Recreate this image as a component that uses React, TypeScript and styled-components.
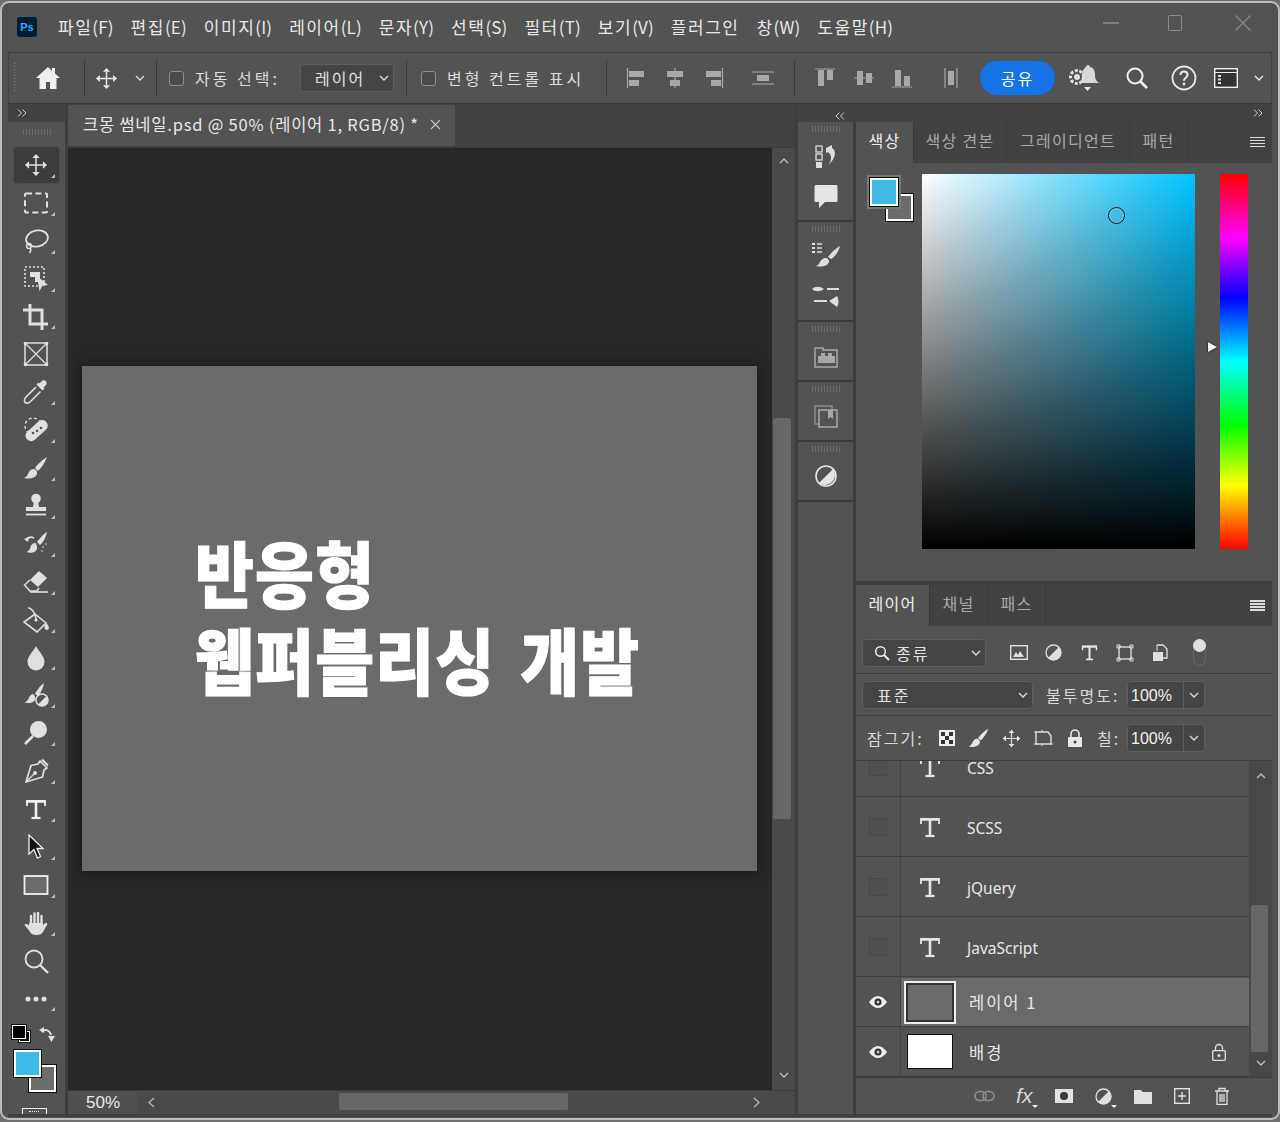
import React from "react";
import styled, { createGlobalStyle } from "styled-components";

const Global = createGlobalStyle`
  html, body { margin: 0; padding: 0; background: #6e6e6e; }
  * { box-sizing: border-box; }
  body { font-family: "Noto Sans CJK KR", "Liberation Sans", sans-serif; }
`;

const Win = styled.div`
  width: 1280px; height: 1119px; margin-top: 1px; background: #535353; color: #e4e4e4;
  border: 2px solid #bdbdbd; border-radius: 9px;
  display: flex; flex-direction: column; overflow: hidden; padding: 0 6px 4px 5px;
`;
const TitleBar = styled.div`
  height: 49px; flex: none; display: flex; align-items: center; padding: 0 0 2px 15px; margin: 0 -6px 0 -5px;
`;
const Logo = styled.div`
  width: 20px; height: 20px; border-radius: 3px; background: #001e36; color: #31a8ff;
  font: 700 11px "Liberation Sans", sans-serif; display: flex; align-items: center; justify-content: center; margin-right: 21px;
`;
const Menu = styled.div`display: flex; gap: 17px; flex: 1;`;
const MenuItem = styled.span`
  font-size: 17px; letter-spacing: 1.5px; white-space: nowrap; color: #e8e8e8; line-height: 24px;
  span { font-size: 17px; letter-spacing: 0.15px; }
`;
const WinCtl = styled.div`display: flex; margin-right: 27px; align-items: center; margin-top: -8px; svg { display: block; }`;
const CtlGap = styled.div<{ $w: number }>`width: ${p => p.$w}px; flex: none;`;

const OptionsBar = styled.div`
  height: 52px; flex: none; display: flex; align-items: center; background: #535353;
  border-top: 1px solid #3e3e3e; border-bottom: 1px solid #3a3a3a; margin: 0 0 0 1px;
  box-shadow: inset 1px 0 #454545, inset -1px 0 #454545;
`;
const Slot = styled.div<{ $w: number }>`
  width: ${p => p.$w}px; flex: none; display: flex; align-items: center; justify-content: center; height: 34px;
`;
const Sep = styled.div`width: 1px; height: 36px; background: #3c3c3c; flex: none;`;
const Grip = styled.div`width: 2px; height: 30px; margin-left: 6px; flex: none; background: repeating-linear-gradient(#6c6c6c 0 1px, transparent 1px 3px); margin-right: 6px;`;
const Check = styled.div`
  width: 15px; height: 15px; border: 1px solid #8f8f8f; border-radius: 3px; flex: none; background: #4a4a4a;
`;
const OptLabel = styled.span<{ $w: number; $ls: number }>`
  font-size: 16px; width: ${p => p.$w}px; flex: none; white-space: nowrap; letter-spacing: ${p => p.$ls}px; color: #dcdcdc;
`;
const Select = styled.div<{ $w: number; $h?: number }>`
  width: ${p => p.$w}px; height: ${p => p.$h ?? 28}px; flex: none; background: #454545; border: 1px solid #5f5f5f; border-radius: 4px;
  display: flex; align-items: center; justify-content: space-between; font-size: 16px; color: #e0e0e0; padding: 0 4px 0 14px; letter-spacing: 2px;
`;
const SearchSelect = styled(Select)`padding-left: 11px;`;
const SearchText = styled.span`flex: 1; margin-left: 6px;`;
const ShareBtn = styled.div`
  width: 75px; height: 34px; border-radius: 17px; background: #1473e6; color: #fff; font-size: 16px; display: flex; align-items: center; justify-content: center; flex: none; letter-spacing: 2px;
`;

const Work = styled.div`flex: 1; display: flex; min-height: 0; gap: 3px; background: #3e3e3e; margin-left: 1px; box-shadow: 0 3px #3e3e3e;`;
const ToolCol = styled.div`
  width: 57px; flex: none; display: flex; flex-direction: column; overflow: hidden; background: #535353;
`;
const CollapseBar = styled.div`
  height: 18px; flex: none; background: #424242; display: flex; align-items: center; padding: 0 9px;
  justify-content: space-between;
`;
const LeftChev = styled.div`margin-left: 28px;`;
const Gripper = styled.div`
  height: 24px; flex: none; display: flex; align-items: center; justify-content: center; padding-bottom: 4px;
  &::before { content: ""; width: 28px; height: 6px; background: repeating-linear-gradient(90deg, #6c6c6c 0 1px, transparent 1px 3px); }
`;
const ToolBtn = styled.div<{ $active?: boolean; $fly?: boolean }>`
  height: 37.9px; flex: none; position: relative; display: flex; align-items: center; justify-content: center; margin: 0 5px; border-radius: 4px; padding-right: 2px;
  background: ${p => (p.$active ? "#3c3c3c" : "transparent")};
  border: 1px solid ${p => (p.$active ? "#4c4c4c" : "transparent")};
  &::after { content: ""; display: ${p => (p.$fly ? "block" : "none")}; position: absolute; right: 4px; bottom: 5px; border: 2.5px solid transparent; border-right-color: #bdbdbd; border-bottom-color: #bdbdbd; }
`;
const SwatchBox = styled.div`height: 94px; flex: none; position: relative; margin-top: 2px;`;
const Swatch = styled.div<{ $c: string; $x: number; $y: number; $s: number; $b?: number }>`
  position: absolute; left: ${p => p.$x}px; top: ${p => p.$y}px; width: ${p => p.$s}px; height: ${p => p.$s}px;
  background: ${p => p.$c}; border: ${p => p.$b ?? 2}px solid #fff; box-shadow: 0 0 0 1px #111;
`;
const SwapIcon = styled.div`position: absolute; left: 31px; top: 6px;`;
const QuickMask = styled.div`
  position: absolute; left: 14px; top: 89px; width: 25px; height: 12px; border: 1.5px solid #eee;
  &::after { content: ""; position: absolute; left: 6px; top: 2px; width: 10px; border-top: 1.5px dotted #eee; }
`;

const DocCol = styled.div`width: 727px; flex: none; display: flex; flex-direction: column;`;
const TabRow = styled.div`height: 44px; flex: none; background: #424242; display: flex; padding-top: 1px; border-bottom: 1px solid #3a3a3a;`;
const DocTab = styled.div`
  width: 387px; background: #535353; height: 41px; display: flex; align-items: center; padding: 0 0 3px 15px; white-space: nowrap; color: #e8e8e8; gap: 11px;
  span { font-size: 16.5px; letter-spacing: 0.78px; }
`;
const DocBody = styled.div`flex: 1; display: flex; min-height: 0;`;
const Canvas = styled.div`flex: 1; background: #282828; padding: 218px 0 0 14px;`;
const Sheet = styled.div`
  width: 675px; height: 505px; background: #6b6b6b; box-shadow: 0 0 14px rgba(0,0,0,.45); padding: 161px 0 0 113px;
`;
const Headline = styled.div`
  color: #fff; font-weight: 900; font-size: 64px; line-height: 78px; letter-spacing: 1.2px; word-spacing: 9px; -webkit-text-stroke: 1px #fff; white-space: nowrap;
  transform: scaleY(1.12); transform-origin: 0 0;
`;
const VScroll = styled.div`
  width: 23px; flex: none; background: #4a4a4a; display: flex; flex-direction: column; align-items: center; position: relative;
`;
const Thumb = styled.div<{ $top: number; $h: number; $w: number; $left: number }>`
  position: absolute; top: ${p => p.$top}px; left: ${p => p.$left}px; height: ${p => p.$h}px; width: ${p => p.$w}px; background: #676767; border-radius: 2px;
`;
const ScrollArrow = styled.div<{ $pos: string }>`
  position: absolute; ${p => p.$pos}; left: 0; right: 0; display: flex; justify-content: center;
`;
const StatusBar = styled.div`height: 24px; flex: none; display: flex; background: #4a4a4a; border-top: 1px solid #3a3a3a;`;
const Zoom = styled.div`width: 69px; flex: none; background: #505050; font: 17px/24px "Liberation Sans", sans-serif; padding-left: 18px; color: #e8e8e8;`;
const HScroll = styled.div`flex: 1; position: relative; display: flex; align-items: center; justify-content: space-between; padding: 0 35px 0 11px;`;
const HThumb = styled.div`position: absolute; left: 202px; top: 2px; width: 229px; height: 17px; background: #676767; border-radius: 2px;`;

const Side = styled.div`flex: 1; display: flex; flex-direction: column; min-width: 0;`;
const SideBody = styled.div`flex: 1; display: flex; gap: 3px; min-height: 0;`;
const Dock = styled.div`width: 55px; flex: none; display: flex; flex-direction: column;`;
const DockSec = styled.div<{ $h?: number }>`
  ${p => (p.$h ? `height:${p.$h}px; flex:none; border-bottom: 2px solid #3a3a3a;` : "flex:1;")}
  background: #535353; display: flex; flex-direction: column; align-items: center;
  & > ${Gripper} { height: 14px; padding-bottom: 0; }
`;
const DockIcon = styled.div<{ $h: number }>`height: ${p => p.$h}px; display: flex; align-items: center; justify-content: center; flex: none;`;
const Panels = styled.div`flex: 1; display: flex; flex-direction: column; gap: 4px; min-width: 0;`;
const Panel = styled.div<{ $h?: number }>`
  display: flex; flex-direction: column; ${p => (p.$h ? `height:${p.$h}px; flex:none;` : "flex:1; min-height:0;")}; background: #535353;
`;
const Tabs = styled.div`height: 41px; flex: none; display: flex; background: #424242; align-items: stretch;`;
const Tab = styled.div<{ $w: number; $on?: boolean }>`
  width: ${p => p.$w}px; flex: none; display: flex; align-items: center; justify-content: center; padding-bottom: 5px;
  font-size: 16px; letter-spacing: 1.3px; color: ${p => (p.$on ? "#f0f0f0" : "#a8a8a8")};
  background: ${p => (p.$on ? "#535353" : "transparent")}; border-right: 1px solid #3a3a3a;
`;
const Burger = styled.div`
  margin-left: auto; margin-right: 7px; align-self: center; width: 15px; height: 11px;
  background: repeating-linear-gradient(#dcdcdc 0 1.5px, transparent 1.5px 3px);
`;
const ColorBody = styled.div`flex: 1; display: flex; position: relative; padding: 11px 0 0 66px; gap: 25px;`;
const Field = styled.div`
  width: 273px; height: 375px; position: relative; flex: none;
  background: linear-gradient(to top, #000, rgba(0,0,0,0)), linear-gradient(to right, #fff, #00c3ff);
`;
const FieldMark = styled.div`
  position: absolute; left: 186px; top: 33px; width: 17px; height: 17px; border-radius: 50%; border: 1.5px solid #111; box-shadow: inset 0 0 0 1px rgba(255,255,255,.25);
`;
const Hue = styled.div`
  width: 28px; height: 375px; flex: none;
  background: linear-gradient(to bottom, #f00 0%, #f0f 17%, #00f 33%, #0ff 50%, #0f0 67%, #ff0 83%, #f00 100%);
  position: relative;
`;
const HueMark = styled.div`
  position: absolute; left: -12px; top: 168px; width: 0; height: 0; border-left: 9px solid #f2f2f2; border-top: 5px solid transparent; border-bottom: 5px solid transparent;
  filter: drop-shadow(0 0 1px #000);
`;
const PanelSwatch = styled.div<{ $c: string; $x: number; $y: number; $s: number; $ring?: boolean }>`
  position: absolute; left: ${p => p.$x}px; top: ${p => p.$y}px; width: ${p => p.$s}px; height: ${p => p.$s}px; background: ${p => p.$c};
  border: 2px solid #fff; box-shadow: 0 0 0 1px #111 ${p => (p.$ring ? ", 0 0 0 3px #777" : "")};
`;

const Row = styled.div<{ $h: number; $pt?: number }>`
  height: ${p => p.$h}px; flex: none; display: flex; align-items: center; border-bottom: 1px solid #3e3e3e; padding-left: 6px; padding-top: ${p => p.$pt ?? 0}px;
`;
const Lbl = styled.span<{ $w: number }>`
  width: ${p => p.$w}px; flex: none; font-size: 16px; color: #d8d8d8; white-space: nowrap; letter-spacing: 2px;
`;
const Input = styled.div`
  width: 78px; height: 28px; flex: none; border: 1px solid #5f5f5f; border-radius: 4px; display: flex; background: #454545; align-items: stretch;
  font: 16px/27px "Liberation Sans", sans-serif; color: #f0f0f0;
`;
const InputVal = styled.span`width: 56px; padding-left: 3px; border-right: 1px solid #5f5f5f;`;
const InputBtn = styled.span`flex: 1; display: flex; align-items: center; justify-content: center;`;
const Knob = styled.div`
  width: 13px; height: 27px; border: 1px solid #6a6a6a; border-radius: 7px; position: relative; flex: none;
  &::before { content: ""; position: absolute; left: -1px; top: -1px; width: 13px; height: 13px; border-radius: 50%; background: #e0e0e0; }
`;
const ListWrap = styled.div`flex: 1; display: flex; min-height: 0;`;
const List = styled.div`flex: 1; display: flex; flex-direction: column; justify-content: flex-end; overflow: hidden; min-width: 0;`;
const Layer = styled.div<{ $h: number }>`
  height: ${p => p.$h}px; flex: none; display: flex; align-items: center; border-bottom: 1px solid #3e3e3e;
`;
const EyeCell = styled.div`
  width: 45px; align-self: stretch; flex: none; display: flex; align-items: center; justify-content: center; border-right: 1px solid #444;
`;
const Vis = styled.div`width: 18px; height: 18px; border: 1px solid #484848; background: #505050;`;
const LayerBody = styled.div<{ $sel?: boolean }>`
  flex: 1; align-self: stretch; display: flex; align-items: center; min-width: 0; background: ${p => (p.$sel ? "#6a6a6a" : "transparent")}; margin-top: ${p => (p.$sel ? 1 : 0)}px; padding-right: 22px;
`;
const TCell = styled.div`width: 58px; display: flex; justify-content: center; flex: none; margin-right: 8px; padding-top: 1px;`;
const LayerName = styled.span<{ $ko?: boolean }>`
  font-family: ${p => (p.$ko ? `"Noto Sans CJK KR", sans-serif` : `"Noto Sans", sans-serif`)}; font-size: ${p => (p.$ko ? 16.5 : 15.5)}px; color: #e8e8e8; flex: 1; letter-spacing: ${p => (p.$ko ? 2 : 0)}px; margin-left: ${p => (p.$ko ? 7 : 0)}px; padding-top: ${p => (p.$ko ? 0 : 3)}px;
`;
const ThumbSel = styled.div`
  width: 52px; height: 43px; border: 2px solid #eee; margin: 0 6px 0 3px; flex: none; background: #6b6b6b; box-shadow: inset 0 0 0 2px #333;
`;
const ThumbBg = styled.div`
  width: 46px; height: 35px; background: #fff; border: 1px solid #111; margin: 0 9px 0 6px; flex: none;
`;
const LScroll = styled.div`width: 23px; flex: none; background: #484848; position: relative;`;
const Footer = styled.div`
  height: 37px; flex: none; display: flex; align-items: center; padding-left: 109px; border-top: 1px solid #3e3e3e;
`;
const FootSlot = styled.div<{ $fly?: boolean }>`
  width: 39.5px; height: 24px; position: relative; display: flex; align-items: center; justify-content: center; flex: none; color: #d8d8d8; font: italic 21px "Liberation Sans", sans-serif;
  &::after { content: ""; display: ${p => (p.$fly ? "block" : "none")}; position: absolute; left: 27px; bottom: 0; border: 3.5px solid transparent; border-top-color: #eee; border-bottom-width: 0; }
`;

const W = "#e0e0e0";
const Svg = ({ s = 26, vb = 26, children }: { s?: number; vb?: number; children: React.ReactNode }) => (
  <svg width={s} height={s} viewBox={`0 0 ${vb} ${vb}`} fill="none" stroke="none">{children}</svg>
);
const Chev = ({ c = "#d8d8d8", up = false }: { c?: string; up?: boolean }) => (
  <svg width="10" height="6" viewBox="0 0 10 6" fill="none"><path d={up ? "M1 5l4-4 4 4" : "M1 1l4 4 4-4"} stroke={c} strokeWidth="1.4" /></svg>
);
const SideChev = ({ left }: { left?: boolean }) => (
  <svg width="7" height="11" viewBox="0 0 7 11" fill="none"><path d={left ? "M6 1L1 5.5 6 10" : "M1 1l5 4.5L1 10"} stroke="#bdbdbd" strokeWidth="1.2" /></svg>
);
const DoubleChev = ({ left }: { left?: boolean }) => (
  <svg width="10" height="8" viewBox="0 0 10 8" fill="none">
    <path d={left ? "M4.500.5L1 4l3.500 3.500M9 .5L5.500 4 9 7.500" : "M1 .5L4.500 4 1 7.500M5.500 .5L9 4 5.500 7.500"} stroke="#d0d0d0" strokeWidth="1" />
  </svg>
);
const MoveI = ({ s = 26, c = W }: { s?: number; c?: string }) => (
  <Svg s={s}>
    <path d="M13 1l4 4.500H9zM13 25l4-4.500H9zM1 13l4.500-4v8zM25 13l-4.500-4v8z" fill={c} />
    <path d="M13 5v16M5 13h16" stroke={c} strokeWidth="1.600" />
  </Svg>
);
const SerifT = ({ s = 22, c = "#e6e6e6" }: { s?: number; c?: string }) => (
  <svg width={s} height={s} viewBox="0 0 22 22" fill="none">
    <path d="M2 8V3h18v5" stroke={c} strokeWidth="1.800" />
    <path d="M2 3.500h18M11 3v17" stroke={c} strokeWidth="2.600" />
    <path d="M6.500 20h9" stroke={c} strokeWidth="2.200" />
  </svg>
);
const brushPath = "M24 2C20 4 14 10 12 13l3 3C18 13 22 8 24 2zM11 14c-4 0-5 3-6 5-.5 1.500-2 3-4 4 4 1 11 1 13-4 .5-2-1-5-3-5z";

const toolIcons: React.ReactNode[] = [
  <MoveI key="m" s={24} />,
  <Svg key="a"><rect x="2" y="3.500" width="22" height="19" rx="1" stroke={W} strokeWidth="2" strokeDasharray="6 3.500" /></Svg>,
  <Svg key="b"><ellipse cx="14" cy="10.500" rx="11" ry="8" stroke={W} strokeWidth="1.800" transform="rotate(-12 14 10.500)" /><circle cx="6" cy="18" r="2.400" stroke={W} strokeWidth="1.500" /><path d="M7 20c1 1 1 3-.5 5" stroke={W} strokeWidth="1.500" /></Svg>,
  <Svg key="c"><rect x="2" y="1" width="19" height="19" stroke={W} strokeWidth="1.600" strokeDasharray="2 2" /><path d="M7 6h10v10h-5v-5H7z" fill={W} /><path d="M14 10l11 9-5.500 .5-3 5.500z" fill={W} /></Svg>,
  <Svg key="d"><path d="M7 0v20h18M0 6h19v20" stroke={W} strokeWidth="3" /></Svg>,
  <Svg key="e"><rect x="2" y="2" width="22" height="22" stroke={W} strokeWidth="1.500" /><path d="M2 2l22 22M24 2L2 24" stroke={W} strokeWidth="1.300" /><circle cx="2.500" cy="2.500" r="1.800" fill={W} /><circle cx="23.500" cy="2.500" r="1.800" fill={W} /><circle cx="2.500" cy="23.500" r="1.800" fill={W} /><circle cx="23.500" cy="23.500" r="1.800" fill={W} /></Svg>,
  <Svg key="f"><path d="M22 1.500c2 1.500 2.500 3.500 .5 5l-2 2 1 1-2 2-6-6 2-2 1 1 2-2c1-1 2-1.500 3.500-1z" fill={W} /><path d="M13 8L3 18c-1.500 1.500-2 3.500-1 5.500 2 1.200 4 .5 5.500-1l10-10" stroke={W} strokeWidth="1.600" /></Svg>,
  <Svg key="g"><circle cx="10" cy="9" r="8" stroke={W} strokeWidth="1.300" strokeDasharray="3 2.500" /><rect x="1" y="8" width="26" height="11" rx="5.500" fill={W} transform="rotate(-42 14 14)" /><circle cx="10" cy="16" r="1.300" fill="#535353" /><circle cx="14" cy="14" r="1.300" fill="#535353" /><circle cx="18" cy="11" r="1.300" fill="#535353" /></Svg>,
  <Svg key="h"><path d={brushPath} fill={W} /></Svg>,
  <Svg key="i"><circle cx="13" cy="5.500" r="4.800" fill={W} /><path d="M11 8h4l1 6h7v4H3v-4h7z" fill={W} /><path d="M3 21.500h20" stroke={W} strokeWidth="1.800" /></Svg>,
  <Svg key="j"><path d="M24 1c-3 1.500-8 7-10 10l3 3c3-2 6-8 7-13zM12.500 12c-3 0-4.500 2-5 4-.5 2-1.500 4-4 5 4 1.500 9 1 10.500-3 .4-2-.5-5-1.500-6z" fill={W} /><path d="M3 9c2-3 5-3.500 8-2" stroke={W} strokeWidth="1.500" /><path d="M1 8l5-2-1 5z" fill={W} /><circle cx="20" cy="16" r=".8" fill={W} /><circle cx="23" cy="13" r=".8" fill={W} /><circle cx="19" cy="20" r=".8" fill={W} /></Svg>,
  <Svg key="k"><path d="M16 2l8 7-9 9-8-7z" fill={W} /><path d="M7 11l-5.500 5 5.500 6h7l2-3" stroke={W} strokeWidth="1.500" /><path d="M7 23h18" stroke={W} strokeWidth="1.600" /></Svg>,
  <Svg key="l"><path d="M12 7l11 9-9 9L1 15z" stroke={W} strokeWidth="1.600" /><path d="M5 1c3-1 8 6 8 11" stroke={W} strokeWidth="1.500" /><circle cx="13" cy="13" r="1.600" fill={W} /><path d="M23 16c2 2 3.500 4 2.500 6-1 1.500-4 1-4-1.500 0-1.500 1-3 1.500-4.500z" fill={W} /></Svg>,
  <Svg key="n"><path d="M13 1c3 6 8.500 10 8.500 16a8.500 8.500 0 0 1-17 0C4.500 11 10 7 13 1z" fill={W} /></Svg>,
  <Svg key="o"><path d="M21 1c-3 2-7 7-9 11l3 2c3-3 5-8 6-13zM10 12c-3 .5-4 3-4.500 5-.5 1-2 2.500-4 3.500 4 1 10 .5 11-3.500 0-2-1-4.500-2.500-5z" fill={W} /><circle cx="19" cy="18" r="6" stroke={W} strokeWidth="1.500" /><path d="M15 22.500l8.500-8.500a6 6 0 0 1-8.500 8.500z" fill={W} /></Svg>,
  <Svg key="p"><circle cx="15.500" cy="9.500" r="8.500" fill={W} /><path d="M10 16l-8 8" stroke={W} strokeWidth="2.500" /></Svg>,
  <Svg key="q"><path d="M17 3l7 7-3 2-1.500 7-16.500 5 5-16.500 7-1.500z" stroke={W} strokeWidth="1.700" strokeLinejoin="round" /><path d="M18 2l6.500 6.500 1-2-5.500-5.500z" fill={W} /><path d="M4 23l7-7" stroke={W} strokeWidth="1.200" /><circle cx="12" cy="15" r="2" fill={W} /></Svg>,
  <SerifT key="r" s={22} c="#f0f0f0" />,
  <Svg key="s"><path d="M6 1v19l5-4.500 3.500 8.500 3-1.500-3.500-8h6z" fill="#111" stroke="#f0f0f0" strokeWidth="1.300" /></Svg>,
  <Svg key="t"><rect x="1.500" y="4" width="23" height="18" fill="#6b6b6b" stroke="#f0f0f0" strokeWidth="1.800" /></Svg>,
  <Svg key="u"><path d="M8 14V6M11.500 13V3.500M15 13V3M18.500 14V6" stroke={W} strokeWidth="2.400" strokeLinecap="round" /><path d="M6 13h14v2l3-2.500 1.500 1.500-4 7c-1.500 3-3.500 4-7 4s-5.500-1-7-4l-5-6 1.500-1.500 3 2z" fill={W} /></Svg>,
  <Svg key="v"><circle cx="11" cy="11" r="8.500" stroke={W} strokeWidth="1.800" /><path d="M17 17l8 8" stroke={W} strokeWidth="2.400" /></Svg>,
  <Svg key="w"><circle cx="5" cy="13" r="2.500" fill={W} /><circle cx="13" cy="13" r="2.500" fill={W} /><circle cx="21" cy="13" r="2.500" fill={W} /></Svg>,
];
const flyouts = [1,1,1,1,1,0,1,1,1,1,1,1,1,1,1,1,1,1,1,1,1,0,1];

const AlignH = ({ kind }: { kind: number }) => {
  const c = "#a8a8a8";
  const shapes = [
    <g key="0"><path d="M1.500 1v20" stroke={c} strokeWidth="1.200" /><rect x="3" y="4" width="15" height="6" fill={c} /><rect x="3" y="13" width="10" height="6" fill={c} /></g>,
    <g key="1"><path d="M11 1v20" stroke={c} strokeWidth="1.200" /><rect x="3" y="4" width="16" height="6" fill={c} /><rect x="6" y="13" width="10" height="6" fill={c} /></g>,
    <g key="2"><path d="M20.500 1v20" stroke={c} strokeWidth="1.200" /><rect x="4" y="4" width="15" height="6" fill={c} /><rect x="9" y="13" width="10" height="6" fill={c} /></g>,
    <g key="3"><path d="M0 5h22M0 17h22" stroke={c} strokeWidth="1.200" /><rect x="5" y="8" width="12" height="6" fill={c} /></g>,
    <g key="4"><path d="M1 2h20" stroke={c} strokeWidth="1.200" /><rect x="4" y="3" width="6" height="16" fill={c} /><rect x="13" y="3" width="6" height="10" fill={c} /></g>,
    <g key="5"><path d="M1 11h20" stroke={c} strokeWidth="1.200" /><rect x="4" y="4" width="6" height="14" fill={c} /><rect x="13" y="6" width="6" height="10" fill={c} /></g>,
    <g key="6"><path d="M1 20h20" stroke={c} strokeWidth="1.200" /><rect x="4" y="3" width="6" height="16" fill={c} /><rect x="13" y="9" width="6" height="10" fill={c} /></g>,
    <g key="7"><path d="M5 1v20M17 1v20" stroke={c} strokeWidth="1.200" /><rect x="8" y="4" width="6" height="14" fill={c} /></g>,
  ];
  return <svg width="22" height="22" viewBox="0 0 22 22" fill="none">{shapes[kind]}</svg>;
};

const Eye = () => (
  <svg width="18" height="12" viewBox="0 0 18 12"><path d="M0 6c3-4 6-6 9-6s6 2 9 6c-3 4-6 6-9 6s-6-2-9-6z" fill="#eee" /><circle cx="9" cy="6" r="3.500" fill="#2c2c2c" /><circle cx="9" cy="6" r="1.500" fill="#ccc" /></svg>
);

const layers = ["CSS", "SCSS", "jQuery", "JavaScript"];
const menus: [string, string][] = [["파일", "(F)"], ["편집", "(E)"], ["이미지", "(I)"], ["레이어", "(L)"], ["문자", "(Y)"], ["선택", "(S)"], ["필터", "(T)"], ["보기", "(V)"], ["플러그인", ""], ["창", "(W)"], ["도움말", "(H)"]];

export default function App() {
  return (
    <Win>
      <Global />
      <TitleBar>
        <Logo>Ps</Logo>
        <Menu>{menus.map(([k, l]) => <MenuItem key={k}>{k}<span>{l}</span></MenuItem>)}</Menu>
        <WinCtl>
          <svg width="16" height="16" viewBox="0 0 16 16"><path d="M0 8h16" stroke="#8c8c8c" strokeWidth="1.500" /></svg>
          <CtlGap $w={48} />
          <svg width="16" height="16" viewBox="0 0 16 16" fill="none"><rect x="1.500" y=".5" width="13" height="15" rx="1" stroke="#8c8c8c" /></svg>
          <CtlGap $w={52} />
          <svg width="16" height="16" viewBox="0 0 16 16" fill="none"><path d="M.5.5l15 15M15.500.5l-15 15" stroke="#8c8c8c" strokeWidth="1.100" /></svg>
        </WinCtl>
      </TitleBar>

      <OptionsBar>
        <Grip />
        <Slot $w={52}>
          <svg width="24" height="22" viewBox="0 0 24 22"><path d="M12 0L0 11h3.500v11H10v-7h4v7h6.500V11H24L19 6.500V1h-3v2.800z" fill="#f0f0f0" /></svg>
        </Slot>
        <Slot $w={10} />
        <Sep />
        <Slot $w={43}><MoveI s={23} c="#e8e8e8" /></Slot>
        <Slot $w={24}><Chev /></Slot>
        <Slot $w={4} />
        <Sep />
        <Slot $w={38}><Check /></Slot>
        <OptLabel $w={105} $ls={3}>자동 선택:</OptLabel>
        <Select $w={94}>레이어<Chev /></Select>
        <Slot $w={12} />
        <Sep />
        <Slot $w={14} />
        <Check />
        <Slot $w={11} />
        <OptLabel $w={159} $ls={3}>변형 컨트롤 표시</OptLabel>
        <Sep />
        <Slot $w={18} />
        <Slot $w={24}><AlignH kind={0} /></Slot>
        <Slot $w={14} />
        <Slot $w={24}><AlignH kind={1} /></Slot>
        <Slot $w={14} />
        <Slot $w={24}><AlignH kind={2} /></Slot>
        <Slot $w={26} />
        <Slot $w={24}><AlignH kind={3} /></Slot>
        <Slot $w={19} />
        <Sep />
        <Slot $w={18} />
        <Slot $w={24}><AlignH kind={4} /></Slot>
        <Slot $w={15} />
        <Slot $w={24}><AlignH kind={5} /></Slot>
        <Slot $w={14} />
        <Slot $w={24}><AlignH kind={6} /></Slot>
        <Slot $w={25} />
        <Slot $w={24}><AlignH kind={7} /></Slot>
        <Slot $w={17} />
        <ShareBtn>공유</ShareBtn>
        <Slot $w={57}>
          <svg width="34" height="32" viewBox="0 0 34 32">
            <path d="M21 3c1 0 2 1 2 2 4 1 5 4 5 8 0 4 1 6 4 8H12c3-2 3-4 3-8 0-4 2-7 4-8 0-1 1-2 2-2z" fill="#d8d8d8" />
            <circle cx="10" cy="15" r="6.500" fill="none" stroke="#e0e0e0" strokeWidth="3" strokeDasharray="3 1.600" />
            <circle cx="10" cy="15" r="3" fill="#e0e0e0" />
            <path d="M17 25h7l-3.500 4z" fill="#e8e8e8" />
          </svg>
        </Slot>
        <Slot $w={50}>
          <svg width="24" height="24" viewBox="0 0 24 24" fill="none"><circle cx="10" cy="10" r="7.500" stroke="#f0f0f0" strokeWidth="2" /><path d="M15.500 15.500L22 22" stroke="#f0f0f0" strokeWidth="2.600" /></svg>
        </Slot>
        <Slot $w={44}>
          <svg width="26" height="26" viewBox="0 0 26 26" fill="none"><circle cx="13" cy="13" r="11.500" stroke="#e8e8e8" strokeWidth="1.800" /><path d="M9.500 10c0-2.500 1.500-3.500 3.500-3.500s3.500 1.200 3.500 3.200c0 3-3.500 3-3.500 6" stroke="#e8e8e8" strokeWidth="2" /><circle cx="13" cy="19" r="1.400" fill="#e8e8e8" /></svg>
        </Slot>
        <Slot $w={40}>
          <svg width="24" height="20" viewBox="0 0 24 20" fill="none"><rect x=".7" y=".7" width="22.600" height="18.600" fill="#333" stroke="#eee" strokeWidth="1.400" /><path d="M1 4.500h22" stroke="#eee" strokeWidth="1.200" /><path d="M4 7h3v2H4zM4 10.500h3v2H4zM4 14h3v2H4z" fill="#ddd" /></svg>
        </Slot>
        <Slot $w={26}><Chev c="#eee" /></Slot>
      </OptionsBar>

      <Work>
        <ToolCol>
          <CollapseBar><DoubleChev /></CollapseBar>
          <Gripper />
          {toolIcons.map((ic, i) => <ToolBtn key={i} $active={i === 0} $fly={flyouts[i] === 1}>{ic}</ToolBtn>)}
          <SwatchBox>
            <Swatch $c="#000" $x={11} $y={12} $s={11} $b={1} />
            <Swatch $c="#000" $x={4} $y={6} $s={14} $b={1} />
            <SwapIcon>
              <svg width="18" height="18" viewBox="0 0 18 18" fill="none"><path d="M3 6c2-3 7-3 9 3" stroke="#e0e0e0" strokeWidth="2" /><path d="M0 4l5-3v6zM9 10h7l-3.500 6z" fill="#e0e0e0" /></svg>
            </SwapIcon>
            <Swatch $c="#6b6b6b" $x={21} $y={46} $s={27} />
            <Swatch $c="#3db9e6" $x={6} $y={31} $s={27} />
            <QuickMask />
          </SwatchBox>
        </ToolCol>

        <DocCol>
          <TabRow>
            <DocTab>
              <span>크몽 썸네일.psd @ 50% (레이어 1, RGB/8) *</span>
              <svg width="11" height="11" viewBox="0 0 11 11"><path d="M1 1l9 9M10 1l-9 9" stroke="#c4c4c4" strokeWidth="1.100" /></svg>
            </DocTab>
          </TabRow>
          <DocBody>
            <Canvas>
              <Sheet><Headline>반응형<br />웹퍼블리싱 개발</Headline></Sheet>
            </Canvas>
            <VScroll>
              <ScrollArrow $pos="top: 10px"><Chev up c="#bdbdbd" /></ScrollArrow>
              <Thumb $top={270} $h={401} $w={18} $left={1} />
              <ScrollArrow $pos="bottom: 12px"><Chev c="#bdbdbd" /></ScrollArrow>
            </VScroll>
          </DocBody>
          <StatusBar>
            <Zoom>50%</Zoom>
            <HScroll>
              <SideChev left />
              <HThumb />
              <SideChev />
            </HScroll>
          </StatusBar>
        </DocCol>

        <Side>
          <CollapseBar><LeftChev><DoubleChev left /></LeftChev><DoubleChev /></CollapseBar>
          <SideBody>
            <Dock>
              <DockSec $h={100}>
                <Gripper />
                <DockIcon $h={40}>
                  <Svg><rect x="3" y="3" width="6" height="6" stroke="#ddd" strokeWidth="1.300" /><rect x="3" y="11" width="6" height="6" stroke="#ddd" strokeWidth="1.300" /><rect x="3" y="19" width="6" height="6" fill="#ddd" /><path d="M13 5l6-3v3c4 2 5 10-4 17 4-5 4-10 0-13l-2 1z" fill="#ddd" /></Svg>
                </DockIcon>
                <DockIcon $h={40}>
                  <Svg><path d="M3 2h20a1.500 1.500 0 0 1 1.500 1.500v14a1.500 1.500 0 0 1-1.500 1.500H12l-6 6v-6H3a1.500 1.500 0 0 1-1.500-1.500v-14A1.500 1.500 0 0 1 3 2z" fill="#e4e4e4" /></Svg>
                </DockIcon>
              </DockSec>
              <DockSec $h={100}>
                <Gripper />
                <DockIcon $h={40}>
                  <Svg s={30} vb={30}><path d="M1 3h3M1 7h3M1 11h3" stroke="#ddd" strokeWidth="2" /><path d="M6 3h5M6 7h5M6 11h5" stroke="#ddd" strokeWidth="1.300" /><path d="M29 5c-4 2-9 7-12 11l3 2c4-2 8-8 9-13zM15 17c-3 0-5 2-6 4-1 2-2 3-4 4 4 1 11 1 13-4 .5-1.500-1-4-3-4z" fill="#ddd" /></Svg>
                </DockIcon>
                <DockIcon $h={40}>
                  <Svg s={30} vb={30}><path d="M1 8c3-3 8-3 12 0-4 3-9 3-12 0zM16 7h12v2H16zM3 19h13v2H3zM18 20l8-5c2 4 2 8 0 11z" fill="#ddd" /></Svg>
                </DockIcon>
              </DockSec>
              <DockSec $h={60}>
                <Gripper />
                <DockIcon $h={40}>
                  <Svg><path d="M2 24V5h8v2h14v17z" stroke="#a8a8a8" strokeWidth="1.500" /><path d="M5 20v-7h3v-3h4v3h3v-3h4v3h3v7z" fill="#a8a8a8" /></Svg>
                </DockIcon>
              </DockSec>
              <DockSec $h={60}>
                <Gripper />
                <DockIcon $h={40}>
                  <Svg><path d="M5 21H2V3h17v4" stroke="#8c8c8c" strokeWidth="1.500" /><rect x="6" y="7" width="18" height="17" stroke="#a8a8a8" strokeWidth="1.500" /><path d="M15 7h5v9l-2.500-2-2.500 2z" fill="#a8a8a8" /></Svg>
                </DockIcon>
              </DockSec>
              <DockSec $h={60}>
                <Gripper />
                <DockIcon $h={40}>
                  <Svg><circle cx="13" cy="13" r="10" stroke="#e6e6e6" strokeWidth="1.600" /><path d="M20 6A10 10 0 0 1 6 20z" fill="#e6e6e6" /></Svg>
                </DockIcon>
              </DockSec>
              <DockSec />
            </Dock>
            <Panels>
              <Panel $h={459}>
                <Tabs>
                  <Tab $w={58} $on>색상</Tab>
                  <Tab $w={93}>색상 견본</Tab>
                  <Tab $w={123}>그레이디언트</Tab>
                  <Tab $w={58}>패턴</Tab>
                  <Burger />
                </Tabs>
                <ColorBody>
                  <PanelSwatch $c="#6b6b6b" $x={30} $y={31} $s={27} />
                  <PanelSwatch $c="#3db9e6" $x={14} $y={15} $s={28} $ring />
                  <Field><FieldMark /></Field>
                  <Hue><HueMark /></Hue>
                </ColorBody>
              </Panel>
              <Panel>
                <Tabs>
                  <Tab $w={74} $on>레이어</Tab>
                  <Tab $w={58}>채널</Tab>
                  <Tab $w={58}>패스</Tab>
                  <Burger />
                </Tabs>
                <Row $h={48} $pt={6}>
                  <SearchSelect $w={124}>
                    <svg width="16" height="16" viewBox="0 0 16 16" fill="none"><circle cx="6.500" cy="6.500" r="4.800" stroke="#eee" strokeWidth="1.500" /><path d="M10 10l5 5" stroke="#eee" strokeWidth="2" /></svg>
                    <SearchText>종류</SearchText><Chev />
                  </SearchSelect>
                  <Slot $w={15} />
                  {[0,1,2,3,4].map(i => (
                    <Slot $w={35.3} key={i}>
                      {i === 0 && <svg width="18" height="15" viewBox="0 0 18 15" fill="none"><rect x=".7" y=".7" width="16.600" height="13.600" stroke="#e0e0e0" strokeWidth="1.400" /><path d="M3 12l3-5 2 3 2-4 4 6z" fill="#e0e0e0" /></svg>}
                      {i === 1 && <svg width="17" height="17" viewBox="0 0 17 17" fill="none"><circle cx="8.500" cy="8.500" r="7.500" stroke="#e0e0e0" strokeWidth="1.300" /><path d="M14 3A7.500 7.500 0 0 1 3 14z" fill="#e0e0e0" /></svg>}
                      {i === 2 && <SerifT s={17} />}
                      {i === 3 && <svg width="18" height="18" viewBox="0 0 18 18" fill="none"><rect x="3" y="3" width="12" height="12" stroke="#e0e0e0" strokeWidth="1.400" /><path d="M1 1h3v3H1zM14 1h3v3h-3zM1 14h3v3H1zM14 14h3v3h-3z" stroke="#e0e0e0" /></svg>}
                      {i === 4 && <svg width="16" height="18" viewBox="0 0 16 18" fill="none"><path d="M5 1h6l4 4v9h-4" stroke="#e0e0e0" strokeWidth="1.300" /><path d="M5 7V1" stroke="#e0e0e0" /><rect x="1" y="8" width="10" height="9" fill="#e0e0e0" /></svg>}
                    </Slot>
                  ))}
                  <Slot $w={16} />
                  <Knob />
                </Row>
                <Row $h={42}>
                  <Select $w={171}>표준<Chev /></Select>
                  <Slot $w={13} />
                  <Lbl $w={81}>불투명도:</Lbl>
                  <Input><InputVal>100%</InputVal><InputBtn><Chev /></InputBtn></Input>
                </Row>
                <Row $h={45}>
                  <Slot $w={5} />
                  <Lbl $w={64}>잠그기:</Lbl>
                  <Slot $w={32}><svg width="16" height="16" viewBox="0 0 16 16"><rect width="16" height="16" fill="#eee" /><path d="M2 2h4v4H2zM10 2h4v4h-4zM6 6h4v4H6zM2 10h4v4H2zM10 10h4v4h-4z" fill="#333" /></svg></Slot>
                  <Slot $w={32}><Svg s={22}><path d={brushPath} fill="#e6e6e6" /></Svg></Slot>
                  <Slot $w={32}><MoveI s={19} c="#e6e6e6" /></Slot>
                  <Slot $w={32}><svg width="22" height="18" viewBox="0 0 22 18" fill="none"><path d="M4 3h12l3 4v8H4z" stroke="#e0e0e0" strokeWidth="1.400" /><path d="M2 3h2M2 15h2M19 15h2M10 1v2M10 15v2" stroke="#e0e0e0" /></svg></Slot>
                  <Slot $w={32}><svg width="16" height="18" viewBox="0 0 16 18" fill="none"><path d="M4 8V5a4 4 0 0 1 8 0v3" stroke="#e8e8e8" strokeWidth="1.600" /><rect x="1" y="8" width="14" height="10" rx="1" fill="#e8e8e8" /><circle cx="8" cy="13" r="1.500" fill="#444" /></svg></Slot>
                  <Slot $w={6} />
                  <Lbl $w={30}>칠:</Lbl>
                  <Input><InputVal>100%</InputVal><InputBtn><Chev /></InputBtn></Input>
                </Row>
                <ListWrap>
                  <List>
                    {layers.map(n => (
                      <Layer key={n} $h={60}>
                        <EyeCell><Vis /></EyeCell>
                        <LayerBody>
                          <TCell><SerifT /></TCell>
                          <LayerName>{n}</LayerName>
                        </LayerBody>
                      </Layer>
                    ))}
                    <Layer $h={50}>
                      <EyeCell><Eye /></EyeCell>
                      <LayerBody $sel><ThumbSel /><LayerName $ko>레이어 1</LayerName></LayerBody>
                    </Layer>
                    <Layer $h={50}>
                      <EyeCell><Eye /></EyeCell>
                      <LayerBody><ThumbBg /><LayerName $ko>배경</LayerName>
                        <svg width="16" height="18" viewBox="0 0 16 18" fill="none"><path d="M4.500 8V5a3.500 3.500 0 0 1 7 0v3" stroke="#e0e0e0" strokeWidth="1.300" /><rect x="1.700" y="7.700" width="12.600" height="9.600" rx="1" stroke="#e0e0e0" strokeWidth="1.300" /><circle cx="8" cy="12.500" r="1.500" fill="#e0e0e0" /></svg>
                      </LayerBody>
                    </Layer>
                  </List>
                  <LScroll>
                    <ScrollArrow $pos="top: 12px"><Chev up c="#bdbdbd" /></ScrollArrow>
                    <Thumb $top={144} $h={147} $w={17} $left={2} />
                    <ScrollArrow $pos="bottom: 11px"><Chev c="#bdbdbd" /></ScrollArrow>
                  </LScroll>
                </ListWrap>
                <Footer>
                  <FootSlot><svg width="21" height="12" viewBox="0 0 21 12" fill="none"><rect x="1" y="1.500" width="11" height="9" rx="4.500" stroke="#909090" strokeWidth="1.500" /><rect x="9" y="1.500" width="11" height="9" rx="4.500" stroke="#909090" strokeWidth="1.500" /></svg></FootSlot>
                  <FootSlot $fly>fx</FootSlot>
                  <FootSlot><svg width="18" height="14" viewBox="0 0 18 14"><rect width="18" height="14" fill="#e0e0e0" /><circle cx="9" cy="7" r="4" fill="#3a3a3a" /></svg></FootSlot>
                  <FootSlot $fly><svg width="17" height="17" viewBox="0 0 17 17" fill="none"><circle cx="8.500" cy="8.500" r="7.500" stroke="#e0e0e0" strokeWidth="1.300" /><path d="M14 3A7.500 7.500 0 0 1 3 14z" fill="#e0e0e0" /></svg></FootSlot>
                  <FootSlot><svg width="18" height="15" viewBox="0 0 18 15"><path d="M0 1h7l1.500 2H18v12H0z" fill="#e0e0e0" /></svg></FootSlot>
                  <FootSlot><svg width="16" height="16" viewBox="0 0 16 16" fill="none"><rect x=".7" y=".7" width="14.600" height="14.600" stroke="#e0e0e0" strokeWidth="1.400" /><path d="M8 4v8M4 8h8" stroke="#e0e0e0" strokeWidth="1.400" /></svg></FootSlot>
                  <FootSlot><svg width="16" height="18" viewBox="0 0 16 18" fill="none"><path d="M1 4h14M5 4V1.500h6V4M3 4v13.300h10V4M6 7v8M8 7v8M10 7v8" stroke="#e0e0e0" strokeWidth="1.300" /></svg></FootSlot>
                </Footer>
              </Panel>
            </Panels>
          </SideBody>
        </Side>
      </Work>
    </Win>
  );
}
